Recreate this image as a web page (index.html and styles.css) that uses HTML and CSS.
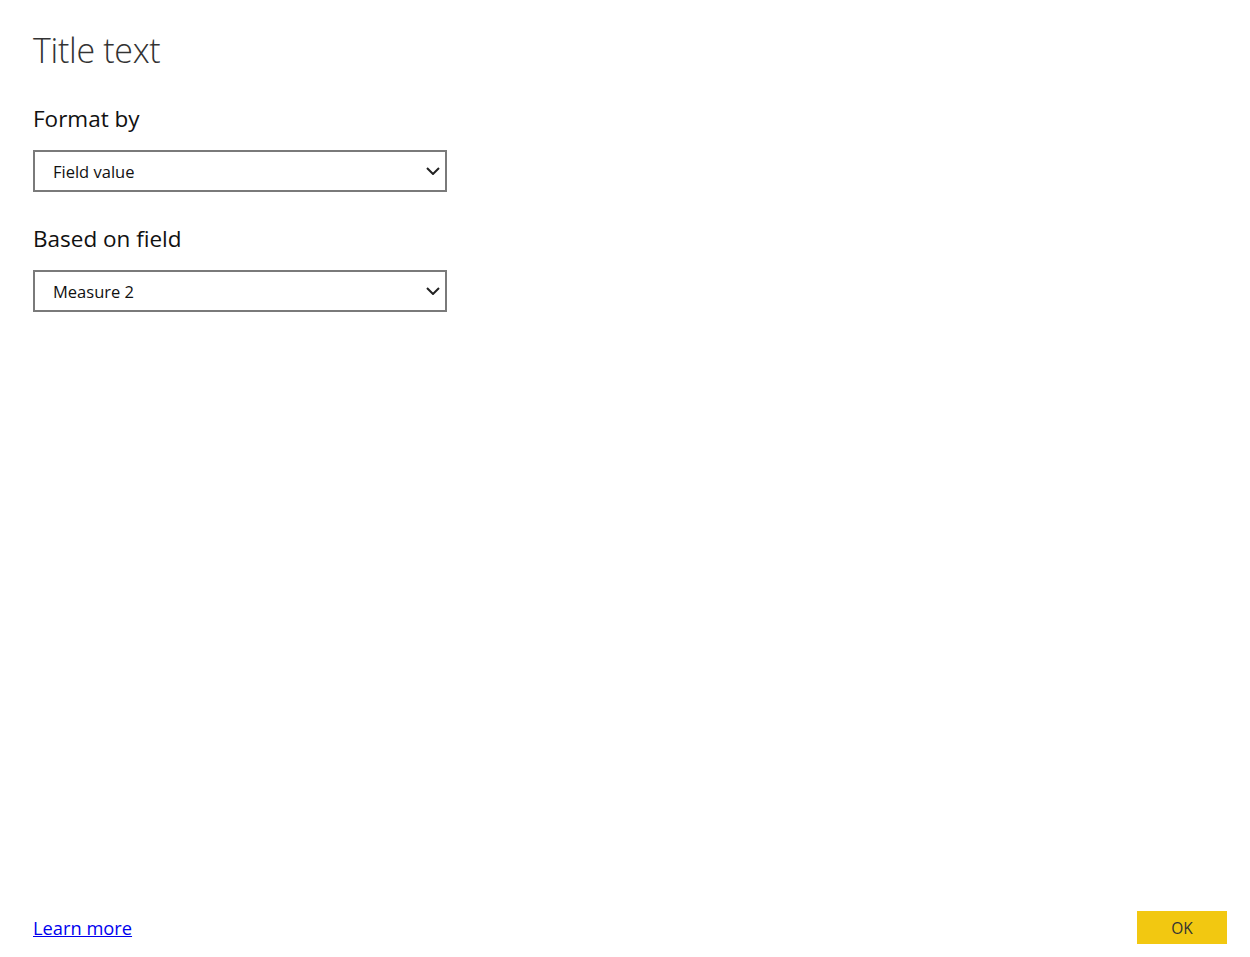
FILE: index.html
```html
<!DOCTYPE html>
<html lang="en">
<head>
<meta charset="utf-8">
<title>Title text</title>
<link rel="stylesheet" href="styles.css">
</head>
<body>
<div class="page">
  <main class="content">
    <h1 class="title">Title text</h1>
    <section class="field">
      <h2 class="label">Format by</h2>
      <div class="dropdown">
        <span class="dropdown-text">Field value</span>
        <svg class="chevron" width="14" height="8" viewBox="0 0 14 8"><path d="M1 1 L7 7 L13 1" fill="none" stroke="#222" stroke-width="2"/></svg>
      </div>
    </section>
    <section class="field">
      <h2 class="label">Based on field</h2>
      <div class="dropdown">
        <span class="dropdown-text">Measure 2</span>
        <svg class="chevron" width="14" height="8" viewBox="0 0 14 8"><path d="M1 1 L7 7 L13 1" fill="none" stroke="#222" stroke-width="2"/></svg>
      </div>
    </section>
  </main>
  <footer class="footer">
    <a class="learn" href="#">Learn more</a>
    <button class="ok" type="button">OK</button>
  </footer>
</div>
</body>
</html>
```
FILE: styles.css
```css
html, body {
  margin: 0;
  padding: 0;
  background: #ffffff;
}
body {
  font-family: "Open Sans", "Noto Sans", sans-serif;
  color: #222;
}
.page {
  box-sizing: border-box;
  height: 957px;
  display: flex;
  flex-direction: column;
  padding: 0 23px 0 33px;
}
.content {
  flex: 1;
}
.title {
  margin: 27px 0 0 0;
  font-size: 34px;
  font-weight: 300;
  line-height: 46px;
  color: #333;
  letter-spacing: -0.3px;
}
.field {
  margin-top: 31px;
}
.field + .field {
  margin-top: 32px;
}
.label {
  margin: 0;
  font-size: 22.5px;
  font-weight: 400;
  line-height: 30px;
  color: #111;
}
.dropdown {
  box-sizing: border-box;
  width: 414px;
  height: 42px;
  margin-top: 16px;
  border: 2px solid #7a7a7a;
  display: flex;
  align-items: center;
  justify-content: space-between;
  padding: 0 5px 0 18px;
}
.dropdown-text {
  font-size: 16.5px;
  color: #111;
}
.chevron {
  display: block;
}
.footer {
  display: flex;
  align-items: center;
  justify-content: space-between;
  height: 33px;
  margin-bottom: 13px;
}
.learn {
  font-size: 18.3px;
  color: #0000ee;
  text-decoration: underline;
  margin-top: 0;
}
.ok {
  width: 90px;
  height: 33px;
  border: none;
  background: #f2c811;
  color: #333;
  font-family: "Open Sans", "Noto Sans", sans-serif;
  font-size: 15.5px;
  padding: 0;
}
```
